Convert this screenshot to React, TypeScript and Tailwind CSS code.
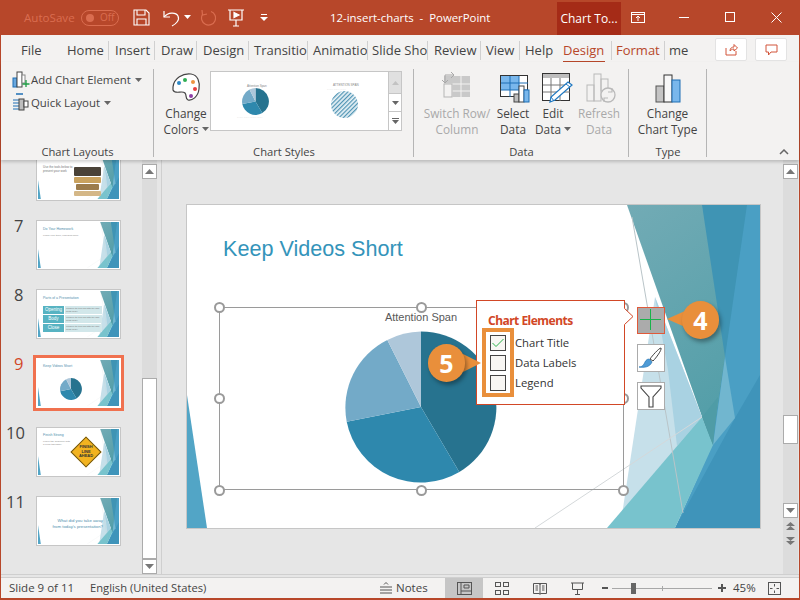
import React from "react";

const UI = "font-['Open_Sans','Noto_Sans',sans-serif]";

function Decor() {
  return (
    <svg viewBox="187 205 573 323" preserveAspectRatio="none" className="absolute inset-0 w-full h-full">
      <defs>
        <linearGradient id="tg" x1="0" y1="0" x2="0.3" y2="1">
          <stop offset="0" stopColor="#72abb5" />
          <stop offset="1" stopColor="#559fa9" />
        </linearGradient>
      </defs>
      <polygon points="187,395 207,528 187,528" fill="#52a5c6" />
      <polygon points="702,205 760,205 760,528 675,528 712,445" fill="#4a9fc4" />
      <polygon points="735,418 760,375 760,528 675,528" fill="#3f94ba" />
      <polygon points="702,205 747,205 725,357 712,445" fill="#3f94b4" />
      <polygon points="627,205 702,205 725,357 712,445" fill="url(#tg)" />
      <polygon points="725,357 735,418 713,445" fill="#71b6cf" />
      <polygon points="655,297 702,417 620,528" fill="#c6e0ea" />
      <polygon points="655,297 702,417 677,446 668,370" fill="#a9d2e2" />
      <polygon points="607,528 702,417 713,445 675,528" fill="#78c3cd" />
      <polygon points="702,417 718,397 713,445" fill="#4f9ca6" />
      <line x1="632" y1="217" x2="683" y2="513" stroke="#b9c4c8" strokeWidth="1" />
      <line x1="702" y1="417" x2="535" y2="528" stroke="#d4d8da" strokeWidth="1" />
    </svg>
  );
}

function Pie({ className }: { className: string }) {
  return (
    <svg viewBox="345 331 152 152" className={className}>
      <path d="M421,407 L421,331.5 A75.5,75.5 0 0 1 459.3,472 Z" fill="#27738f" />
      <path d="M421,407 L459.3,472 A75.5,75.5 0 0 1 346.7,421.7 Z" fill="#2e88ad" />
      <path d="M421,407 L346.7,421.7 A75.5,75.5 0 0 1 387.3,340 Z" fill="#73aac8" />
      <path d="M421,407 L387.3,340 A75.5,75.5 0 0 1 421,331.5 Z" fill="#aec7da" />
    </svg>
  );
}

function Thumb({ n, selected, children }: { n: string; selected?: boolean; children?: React.ReactNode }) {
  return (
    <div className="flex h-[50px] shrink-0">
      <div className={`w-[35px] text-[16.5px] leading-[12px] ${n.length > 1 ? "pl-[5px]" : "pl-[13px]"} ${selected ? "text-[#d24726]" : "text-[#444444]"}`}>
        {n}
      </div>
      <div
        className={`relative w-[85px] h-[50px] bg-white overflow-hidden ${selected ? "border border-white outline-[3px] outline outline-[#f0714f]" : "border border-[#c6c6c6]"}`}
      >
        <div className="absolute inset-[1px]">
          <Decor />
        </div>
        {children}
      </div>
    </div>
  );
}

function Tiny({ className, children }: { className: string; children: React.ReactNode }) {
  return <div className={`absolute font-['Liberation_Sans',sans-serif] whitespace-nowrap ${className}`}>{children}</div>;
}

function Handle({ x, y }: { x: string; y: string }) {
  return <div className={`absolute w-[11px] h-[11px] rounded-full bg-white border-2 border-[#9a9a9a] ${x} ${y}`} />;
}

function Tri({ c = "#666666" }: { c?: string }) {
  return (
    <svg width="7" height="4" viewBox="0 0 7 4" className="inline-block">
      <path d="M0 0H7L3.5 4Z" fill={c} />
    </svg>
  );
}

function BigBtn({ w, dim, l1, l2, caret, icon }: { w: string; dim?: boolean; l1: string; l2: string; caret?: boolean; icon: React.ReactNode }) {
  return (
    <div className={`${w} flex flex-col items-center shrink-0`}>
      <div className="h-[42px] w-full flex items-end justify-center">{icon}</div>
      <div className={`mt-[1px] text-center text-[11.8px] leading-[16px] whitespace-nowrap ${dim ? "text-[#a9a9a9]" : "text-[#444444]"}`}>
        <div>{l1}</div>
        <div>
          {l2}
          {caret && (
            <span className="ml-[3px] relative top-[-2px]">
              <Tri />
            </span>
          )}
        </div>
      </div>
    </div>
  );
}

function Group({ w, label, children }: { w: string; label: string; children: React.ReactNode }) {
  return (
    <div className={`${w} shrink-0 flex flex-col relative h-full`}>
      <div className="flex-1 flex min-h-0">{children}</div>
      <div className="h-[16px] text-center text-[11.2px] leading-[16px] text-[#444444]">{label}</div>
      <div className="absolute right-0 top-[7px] bottom-[3px] w-px bg-[#b5b5b5]" />
    </div>
  );
}

const tabs = [
  { t: "File", c: "w-[56px] pl-[20px]" },
  { t: "Home", c: "w-[52px] pl-[10px] border-r" },
  { t: "Insert", c: "w-[46px] pl-[6px] border-r" },
  { t: "Draw", c: "w-[42px] pl-[6px] border-r" },
  { t: "Design", c: "w-[52px] pl-[6px] border-r" },
  { t: "Transitio", c: "w-[59px] pl-[5px] border-r" },
  { t: "Animatio", c: "w-[60px] pl-[5px] border-r" },
  { t: "Slide Show", c: "w-[60px] pl-[4px] pr-[5px] border-r" },
  { t: "Review", c: "w-[53px] pl-[6px] border-r" },
  { t: "View", c: "w-[39px] pl-[5px] border-r" },
  { t: "Help", c: "w-[39px] pl-[5px]" },
];

function ScrollBtn({ up, className = "" }: { up?: boolean; className?: string }) {
  return (
    <div className={`w-[15px] h-[15px] bg-white border border-[#ababab] flex items-center justify-center shrink-0 ${className}`}>
      <svg width="9" height="5" viewBox="0 0 9 5">
        <path d={up ? "M0 5H9L4.5 0Z" : "M0 0H9L4.5 5Z"} fill="#777777" />
      </svg>
    </div>
  );
}

export default function App() {
  return (
    <div className={`w-[800px] h-[600px] flex flex-col bg-[#b7472a] overflow-hidden ${UI}`}>
      {/* Title bar */}
      <div className="h-[35px] shrink-0 flex items-center text-white text-[12px] relative">
        <span className="ml-[24px] w-[57px] text-[#da6d50] text-[11.6px]">AutoSave</span>
        <div className="w-[38px] h-[16px] rounded-full border border-[#da6d50] flex items-center pl-[4px] text-[#da6d50] text-[10px]">
          <span className="w-[8px] h-[8px] rounded-full bg-[#da6d50] mr-[6px]" />
          Off
        </div>
        <svg width="17" height="17" viewBox="0 0 17 17" className="ml-[14px]" fill="none" stroke="#fff" strokeWidth="1.1">
          <path d="M1 1H13L16 4V16H1Z" />
          <path d="M4 1V6H12V1M4 16V10H13V16" />
        </svg>
        <svg width="18" height="18" viewBox="0 0 18 18" className="ml-[13px]" fill="none" stroke="#fff" strokeWidth="1.2">
          <path d="M1 2V8H7" />
          <path d="M1 8C5 3 13 3 15 7C17 11 13 15 9 17" />
        </svg>
        <span className="ml-[3px] relative top-[-1px] flex">
          <Tri c="#ffffff" />
        </span>
        <svg width="17" height="17" viewBox="0 0 17 17" className="ml-[8px]" fill="none" stroke="#da6d50" strokeWidth="1.2">
          <path d="M3 1L3.5 6L8 5" />
          <path d="M3.5 5.5A7 7 0 1 0 12 2.5" />
        </svg>
        <svg width="17" height="18" viewBox="0 0 17 18" className="ml-[12px]" fill="none" stroke="#fff" strokeWidth="1.2">
          <path d="M0 1H16M2 1V11H14V1M8 11V17M5 17H11" />
          <path d="M6 3.5L11 6L6 8.5Z" fill="#fff" />
        </svg>
        <svg width="8" height="8" viewBox="0 0 8 8" className="ml-[15px]" fill="#fff">
          <rect x="1" y="0" width="6" height="1" />
          <path d="M0 3H8L4 7Z" />
        </svg>
        <span className="ml-[62px] text-[11.4px] whitespace-pre">12-insert-charts  -  PowerPoint</span>
        <div className="absolute left-[557px] top-[2px] w-[64px] h-[33px] bg-[#a52b17] flex items-center justify-center text-[12px]">
          Chart To...
        </div>
        <svg width="14" height="11" viewBox="0 0 14 11" className="absolute left-[631px] top-[12px]" fill="none" stroke="#fff" strokeWidth="1">
          <rect x="0.5" y="0.5" width="13" height="10" />
          <path d="M0.5 2.5H13.5M7 9V4.5M5 6L7 4L9 6" />
        </svg>
        <div className="absolute left-[679px] top-[17px] w-[10px] h-px bg-white" />
        <div className="absolute left-[725px] top-[12px] w-[10px] h-[10px] border border-white" />
        <svg width="11" height="11" viewBox="0 0 11 11" className="absolute left-[771px] top-[12px]" stroke="#fff" strokeWidth="1">
          <path d="M0.5 0.5L10.5 10.5M10.5 0.5L0.5 10.5" />
        </svg>
      </div>

      {/* Ribbon + body wrapper */}
      <div className="flex-1 min-h-0 flex flex-col mx-px bg-[#f3f2f1]">
        {/* Tabs */}
        <div className="h-[27px] shrink-0 flex items-center pt-[3px] text-[13px] text-[#444444] relative">
          {tabs.map((t) => (
            <div key={t.t} className={`${t.c} h-[19px] leading-[18px] overflow-hidden whitespace-nowrap border-[#d0d0d0] shrink-0`}>
              {t.t}
            </div>
          ))}
          <div className="w-[52px] h-[19px] leading-[18px] shrink-0 pl-[4px] text-[#b7472a] relative">
            Design
            <div className="absolute left-[4px] top-[20px] w-[42px] h-[3px] bg-[#b7472a]" />
          </div>
          <div className="w-[53px] h-[19px] leading-[18px] shrink-0 pl-[4px] text-[#b7472a] border-l border-[#d0d0d0]">Format</div>
          <div className="h-[19px] leading-[18px] pl-[4px] border-l border-[#d0d0d0]">me</div>
          <div className="absolute left-[714px] top-[3px] w-[32px] h-[23px] bg-white border border-[#e3e3e3] rounded-[2px] flex items-center justify-center">
            <svg width="13" height="13" viewBox="0 0 13 13" fill="none" stroke="#d2553a" strokeWidth="1">
              <path d="M1 5V12H11V8M5 8C5 5 7 4 9 4V1.5L12.5 5L9 8V6C7 6 6 7 5 8Z" />
            </svg>
          </div>
          <div className="absolute left-[754px] top-[3px] w-[32px] h-[23px] bg-white border border-[#e3e3e3] rounded-[2px] flex items-center justify-center">
            <svg width="13" height="12" viewBox="0 0 13 12" fill="none" stroke="#d2553a" strokeWidth="1">
              <path d="M1 1H12V8H6L3.5 11V8H1Z" />
            </svg>
          </div>
        </div>

        {/* Ribbon */}
        <div className="h-[98px] shrink-0 flex relative z-10 bg-[#f3f2f1] shadow-[0_2px_3px_rgba(0,0,0,0.18)] text-[#444444]">
          <Group w="w-[153px]" label="Chart Layouts">
            <div className="flex flex-col pl-[11px] pt-[9px] gap-[5px] text-[11.4px] leading-[18px]">
              <div className="flex items-center h-[18px]">
                <svg width="18" height="18" viewBox="0 0 18 18" fill="none" className="relative top-[-1px]">
                  <rect x="1" y="8" width="4" height="9" fill="#69a8df" stroke="#1f6fb5" />
                  <rect x="5" y="2" width="5" height="15" fill="#fff" stroke="#444" />
                  <rect x="10" y="5" width="3" height="8" fill="#fff" stroke="#888" />
                  <path d="M14 10V17M10.5 14H17.5" stroke="#1f9d45" strokeWidth="1.3" />
                </svg>
                <span className="ml-[1px] whitespace-nowrap">Add Chart Element</span>
                <span className="ml-[4px] flex"><Tri /></span>
              </div>
              <div className="flex items-center h-[18px]">
                <svg width="18" height="18" viewBox="0 0 18 18" fill="none" className="relative top-[-1px]">
                  <path d="M4 1H11" stroke="#1f6fb5" strokeWidth="1.5" />
                  <path d="M1 7H7M1 10H7M1 13H7M1 16H7" stroke="#1f6fb5" />
                  <rect x="7" y="6" width="5" height="11" fill="#bdbdbd" stroke="#444" />
                  <rect x="12" y="8" width="4" height="6" fill="#fff" stroke="#444" />
                </svg>
                <span className="ml-[1px] whitespace-nowrap">Quick Layout</span>
                <span className="ml-[4px] flex"><Tri /></span>
              </div>
            </div>
          </Group>
          <Group w="w-[260px]" label="Chart Styles">
            <BigBtn
              w="w-[64px]"
              l1="Change"
              l2="Colors"
              caret
              icon={
                <svg width="30" height="30" viewBox="0 0 30 30" fill="none" className="mb-[2px]">
                  <path d="M2 15C3 6 12 1 20 2C27 3 29 10 28 17C27 25 21 29 17 28C14 27 16 23 14 21C11 18 4 23 2 18Z" fill="#fff" stroke="#444" strokeWidth="1.2" />
                  <circle cx="8" cy="11" r="2" fill="#2e88c5" />
                  <circle cx="14" cy="8" r="2" fill="#2fae55" />
                  <circle cx="22" cy="10" r="2" fill="#ee9340" />
                  <circle cx="24" cy="17" r="2" fill="#e8403f" />
                  <circle cx="20" cy="24" r="2" fill="#8e3fa6" />
                </svg>
              }
            />
            <div className="ml-[-8px] mt-[9px] w-[192px] h-[60px] bg-white border border-[#c6c6c6] flex relative">
              <div className="w-[88px] relative shrink-0">
                <Tiny className="left-[36px] top-[12px] text-[3px] text-[#888]">Attention Span</Tiny>
                <Pie className="absolute left-[31px] top-[16px] w-[27px] h-[27px]" />
                <Tiny className="left-[26px] top-[44px] text-[2.5px] text-[#888]">------- ------- ------- -------</Tiny>
              </div>
              <div className="flex-1 relative">
                <Tiny className="left-[34px] top-[11px] text-[3px] text-[#888]">ATTENTION SPAN</Tiny>
                <Tiny className="left-[28px] top-[16px] text-[2.5px] text-[#888]">------- ------- -------</Tiny>
                <svg width="27" height="27" viewBox="0 0 27 27" className="absolute left-[32px] top-[19px]">
                  <defs>
                    <pattern id="hatch" width="3" height="3" patternUnits="userSpaceOnUse" patternTransform="rotate(-45)">
                      <rect width="3" height="3" fill="#e6f1f6" />
                      <rect width="3" height="1.2" fill="#4e93b3" />
                    </pattern>
                  </defs>
                  <circle cx="13.5" cy="13.5" r="13.5" fill="url(#hatch)" />
                </svg>
              </div>
              <div className="w-[13px] shrink-0 ml-auto border-l border-[#c6c6c6] flex flex-col">
                <div className="h-[21px] bg-[#e0e0e0] flex items-center justify-center">
                  <svg width="7" height="4" viewBox="0 0 7 4"><path d="M0 4H7L3.5 0Z" fill="#c2c2c2" /></svg>
                </div>
                <div className="h-[19px] border-y border-[#c6c6c6] flex items-center justify-center">
                  <Tri />
                </div>
                <div className="flex-1 flex flex-col items-center justify-center">
                  <div className="w-[7px] h-px bg-[#666] mb-px" />
                  <Tri />
                </div>
              </div>
            </div>
          </Group>
          <Group w="w-[215px]" label="Data">
            <div className="w-[7px] shrink-0" />
            <BigBtn
              w="w-[72px]"
              dim
              l1="Switch Row/"
              l2="Column"
              icon={
                <svg width="30" height="27" viewBox="0 0 30 27" fill="none" className="mb-[6px] mr-[2px]">
                  <rect x="3" y="5" width="26" height="21" fill="#c9c9c9" />
                  <path d="M11 13V26M20 5V26M3 13H29M3 20H29" stroke="#f3f2f1" />
                  <rect x="3" y="13" width="8" height="13" fill="#f3f2f1" stroke="#b5b5b5" />
                  <path d="M4 11V4H12M10 1L13 4L10 7M1 9L4 12L7 9" stroke="#a8a8a8" />
                </svg>
              }
            />
            <BigBtn
              w="w-[40px]"
              l1="Select"
              l2="Data"
              icon={
                <svg width="30" height="28" viewBox="0 0 30 28" fill="none" className="mb-[1px] ml-[4px]">
                  <rect x="0.5" y="0.5" width="27" height="21" fill="#fff" stroke="#333" />
                  <rect x="1" y="1" width="18" height="14" fill="#79b7ec" />
                  <path d="M10 1V22M19 1V22M1 8H28M1 15H28" stroke="#1f6fb5" />
                  <rect x="14" y="19" width="5" height="8" fill="#bdbdbd" stroke="#444" />
                  <rect x="19" y="11" width="5" height="16" fill="#fff" stroke="#444" />
                  <rect x="24" y="15" width="5" height="12" fill="#79b7ec" stroke="#1f6fb5" />
                </svg>
              }
            />
            <BigBtn
              w="w-[40px]"
              l1="Edit"
              l2="Data"
              caret
              icon={
                <svg width="31" height="30" viewBox="0 0 31 30" fill="none" className="mb-[1px] ml-[8px]">
                  <rect x="0.5" y="0.5" width="27" height="27" fill="#fff" stroke="#333" />
                  <rect x="1" y="1" width="26" height="4" fill="#bdbdbd" />
                  <path d="M9 5V28M18 5V28M1 12H28M1 19H28" stroke="#777" />
                  <path d="M26 9L30 12L13 27L8 29L9 24Z" fill="#fff" stroke="#1f78c1" strokeWidth="1.2" />
                  <path d="M24 11L28 14M9 24L12 28" stroke="#1f78c1" />
                </svg>
              }
            />
            <BigBtn
              w="w-[52px]"
              dim
              l1="Refresh"
              l2="Data"
              icon={
                <svg width="30" height="30" viewBox="0 0 30 30" fill="none" stroke="#b9b9b9" className="mb-[1px] ml-[4px]">
                  <rect x="1" y="12" width="7" height="16" />
                  <rect x="8" y="1" width="7" height="27" />
                  <rect x="15" y="6" width="7" height="12" />
                  <circle cx="22" cy="22" r="7" fill="#f3f2f1" strokeWidth="1.3" />
                  <path d="M26 15V19H22M18 29V25H22" strokeWidth="1.1" />
                </svg>
              }
            />
          </Group>
          <Group w="w-[78px]" label="Type">
            <BigBtn
              w="w-[77px]"
              l1="Change"
              l2="Chart Type"
              icon={
                <svg width="26" height="29" viewBox="0 0 26 29" fill="none" className="mb-[1px]">
                  <rect x="1" y="12" width="8" height="16" fill="#c4c4c4" stroke="#555" />
                  <rect x="9" y="1" width="8" height="27" fill="#f8f8f8" stroke="#333" />
                  <rect x="17" y="6" width="8" height="22" fill="#79b7ec" stroke="#1f6fb5" />
                </svg>
              }
            />
          </Group>
          <div className="flex-1 relative">
            <svg width="10" height="6" viewBox="0 0 10 6" className="absolute right-[10px] bottom-[5px]" fill="none" stroke="#666" strokeWidth="1.5">
              <path d="M1 5L5 1L9 5" />
            </svg>
          </div>
        </div>

        {/* Main */}
        <div className="flex-1 min-h-0 flex bg-[#e6e6e6]">
          {/* Thumbnails */}
          <div className="w-[141px] shrink-0 overflow-hidden">
            <div className="flex flex-col gap-[19px] -mt-[9px]">
              <Thumb n="">
                <Tiny className="left-[6px] top-[13px] text-[3px] text-[#777] leading-[4px]">Use the tools below to<br />present your work</Tiny>
                <div className="absolute left-[37px] top-[15px] w-[27px] h-[31px] flex flex-col gap-px">
                  <div className="h-[9px] bg-[#4a4238] rounded-[1px]" />
                  <div className="h-[6px] bg-[#c9a25f] rounded-[1px]" />
                  <div className="h-[6px] bg-[#9c7c4c] rounded-[1px] mx-[2px]" />
                  <div className="h-[5px] bg-[#d4b787] rounded-[1px]" />
                </div>
              </Thumb>
              <Thumb n="7">
                <Tiny className="left-[6px] top-[6px] text-[3.5px] text-[#4f90ad]">Do Your Homework</Tiny>
                <Tiny className="left-[6px] top-[13px] text-[2.5px] text-[#888]">Learn your topic, research more</Tiny>
              </Thumb>
              <Thumb n="8">
                <Tiny className="left-[6px] top-[6px] text-[3.5px] text-[#4f90ad]">Parts of a Presentation</Tiny>
                <div className="absolute left-[6px] top-[16px] flex flex-col gap-px">
                  {["Opening", "Body", "Close"].map((s) => (
                    <div key={s} className="flex gap-px">
                      <div className="w-[21px] h-[8px] bg-[#57b3c2] text-white text-[4.5px] leading-[8px] text-center font-['Liberation_Sans',sans-serif]">{s}</div>
                      <div className="w-[37px] h-[8px] bg-[#d2e7ea] text-[#777] text-[2px] leading-[3px] font-['Liberation_Sans',sans-serif] px-px pt-px overflow-hidden">Introduce the topic and state the main points clearly</div>
                    </div>
                  ))}
                </div>
              </Thumb>
              <Thumb n="9" selected>
                <Tiny className="left-[6px] top-[5px] text-[3.5px] text-[#4f90ad]">Keep Videos Short</Tiny>
                <Pie className="absolute left-[23px] top-[19px] w-[22px] h-[22px]" />
              </Thumb>
              <Thumb n="10">
                <Tiny className="left-[6px] top-[5px] text-[3.5px] text-[#4f90ad]">Finish Strong</Tiny>
                <Tiny className="left-[6px] top-[12px] text-[2.5px] leading-[3px] text-[#888]">Leave the audience with<br />a clear takeaway</Tiny>
                <div className="absolute left-[38px] top-[13px] w-[22px] h-[22px] rotate-45 bg-[#f2b320] border border-[#6b5310]" />
                <Tiny className="left-[39px] top-[17px] w-[20px] text-center text-[4px] leading-[4.5px] font-bold text-[#333]">FINISH<br />LINE<br />AHEAD</Tiny>
              </Thumb>
              <Thumb n="11">
                <Tiny className="left-[9px] top-[21px] w-[57px] text-right text-[4.3px] leading-[6px] text-[#4f90ad]">What did you take away<br />from today's presentation?</Tiny>
              </Thumb>
            </div>
          </div>

          {/* Thumb scrollbar */}
          <div className="w-[15px] shrink-0 bg-[#dcdcdc] flex flex-col pt-[4px]">
            <ScrollBtn up />
            <div className="flex-1 relative">
              <div className="absolute left-0 right-0 bottom-0 top-[199px] bg-white border border-[#ababab]" />
            </div>
            <ScrollBtn />
          </div>
          <div className="w-[4px] shrink-0" />
          <div className="w-px shrink-0 bg-[#cfcfcf]" />

          {/* Editor */}
          <div className="flex-1 min-w-0 pl-[25px] pt-[45px] relative overflow-hidden">
            <div className="relative w-[573px] h-[323px] bg-white ring-1 ring-[#c6c6c6]">
              <Decor />
              <div className="absolute left-[36px] top-[29px] text-[21.6px] leading-[30px] text-[#3494ba] font-['Liberation_Sans',sans-serif]">
                Keep Videos Short
              </div>

              {/* Chart frame */}
              <div className="absolute left-[32px] top-[102px] w-[405px] h-[183px] border border-[#9a9a9a]" />
              <div className="absolute left-[134px] top-[105px] w-[200px] text-center text-[11px] leading-[14px] text-[#595959] font-['Liberation_Sans',sans-serif]">
                Attention Span
              </div>
              <Pie className="absolute left-[158px] top-[126px] w-[152px] h-[152px]" />
              <Handle x="left-[27px]" y="top-[97px]" />
              <Handle x="left-[229px]" y="top-[97px]" />
              <Handle x="left-[431px]" y="top-[97px]" />
              <Handle x="left-[27px]" y="top-[188px]" />
              <Handle x="left-[431px]" y="top-[188px]" />
              <Handle x="left-[27px]" y="top-[280px]" />
              <Handle x="left-[229px]" y="top-[280px]" />
              <Handle x="left-[431px]" y="top-[280px]" />

              {/* Chart elements popup */}
              <div className="absolute left-[289px] top-[95px] w-[149px] h-[105px] bg-white border border-[#d24726] text-[11.3px] text-[#333333]">
                <div className="absolute left-[11px] top-[12px] text-[12px] leading-[16px] font-bold text-[#d24726] whitespace-nowrap font-['Noto_Sans',sans-serif] tracking-[-0.5px]">
                  Chart Elements
                </div>
                <div className="absolute left-[13px] top-[34px] flex flex-col gap-[4px]">
                  {["Chart Title", "Data Labels", "Legend"].map((s, i) => (
                    <div key={s} className="flex items-center h-[16px]">
                      <div className="w-[16px] h-[16px] bg-[#f8f6f3] border border-[#444444] flex items-center justify-center shrink-0">
                        {i === 0 && (
                          <svg width="12" height="10" viewBox="0 0 12 10" fill="none" stroke="#2bb34a" strokeWidth="1">
                            <path d="M0.5 5L4 8.5L11.5 1" />
                          </svg>
                        )}
                      </div>
                      <span className="ml-[9px] whitespace-nowrap leading-[16px]">{s}</span>
                    </div>
                  ))}
                </div>
                <div className="absolute left-[5px] top-[27px] w-[32px] h-[69px] border-[4px] border-[#e98f3b]" />
              </div>
              <svg width="12" height="20" viewBox="0 0 12 20" className="absolute left-[436px] top-[102px]">
                <path d="M1 1L10 9.5L1 18" fill="#fff" stroke="#d24726" />
                <rect x="0" y="1.5" width="1.5" height="16" fill="#fff" />
              </svg>

              {/* Chart buttons */}
              <div className="absolute left-[450px] top-[102px] flex flex-col gap-[10px]">
                <div className="w-[28px] h-[27px] bg-[#ababab] border border-[#e0593a] relative">
                  <div className="absolute left-[12px] top-[1px] w-px h-[21px] bg-[#19b34a]" />
                  <div className="absolute left-[2px] top-[11px] w-[21px] h-px bg-[#19b34a]" />
                </div>
                <div className="w-[28px] h-[28px] bg-white border border-[#ababab] flex items-center justify-center">
                  <svg width="24" height="22" viewBox="0 0 24 22" fill="none">
                    <path d="M22 1C20 1 13 9 11 12L14 14C17 11 23 3 22 1Z" fill="#fff" stroke="#444" />
                    <path d="M10 12C7 12 6 15 5 17C4 19 2 20 0 20C5 21 11 20 13 15Z" fill="#4e9bd6" stroke="#2a78b8" strokeWidth="0.7" />
                  </svg>
                </div>
                <div className="w-[28px] h-[28px] bg-white border border-[#ababab] flex items-center justify-center">
                  <svg width="22" height="23" viewBox="0 0 22 23" fill="none" stroke="#444" strokeWidth="1.1">
                    <path d="M1 1H21V3L13 12V22H9V12L1 3Z" />
                  </svg>
                </div>
              </div>

              {/* Callout 4 */}
              <svg width="20" height="20" viewBox="0 0 20 20" className="absolute left-[480px] top-[105px]">
                <path d="M0 9L18 1V17Z" fill="#e98f3b" />
              </svg>
              <div className="absolute left-[495px] top-[96px] w-[37px] h-[38px] rounded-full bg-[#e98f3b] shadow-[2px_3px_4px_rgba(0,0,0,0.35)] flex items-center justify-center text-white text-[25px] font-bold font-['Open_Sans',sans-serif] leading-none">
                4
              </div>

              {/* Callout 5 */}
              <svg width="20" height="20" viewBox="0 0 20 20" className="absolute left-[274px] top-[148px]">
                <path d="M20 10L2 1V19Z" fill="#e98f3b" />
              </svg>
              <div className="absolute left-[241px] top-[139px] w-[37px] h-[38px] rounded-full bg-[#e98f3b] shadow-[2px_3px_4px_rgba(0,0,0,0.35)] flex items-center justify-center text-white text-[25px] font-bold font-['Open_Sans',sans-serif] leading-none">
                5
              </div>
            </div>
          </div>

          {/* Right scrollbar */}
          <div className="w-[15px] shrink-0 bg-[#dcdcdc] flex flex-col pt-[4px] relative">
            <ScrollBtn up />
            <div className="h-[236px] relative shrink-0">
              <div className="absolute left-0 top-[236px] w-[15px] h-[29px] bg-white border border-[#ababab]" />
            </div>
            <div className="h-[88px] shrink-0" />
            <ScrollBtn />
            <div className="flex flex-col items-center mt-[4px] gap-[5px]">
              <svg width="9" height="9" viewBox="0 0 9 9" fill="#777">
                <path d="M4.5 0L9 4H0ZM4.5 4L9 8H0Z" />
              </svg>
              <svg width="9" height="9" viewBox="0 0 9 9" fill="#777">
                <path d="M4.5 9L9 5H0ZM4.5 5L9 1H0Z" />
              </svg>
            </div>
          </div>
          <div className="w-[1px] shrink-0" />
        </div>

        <div className="h-[3px] shrink-0 bg-[#e6e6e6] border-t border-[#cfcfcf]" />

        {/* Status bar */}
        <div className="h-[21px] shrink-0 bg-[#f3f2f1] border-t border-[#cfcfcf] flex items-center text-[11.5px] text-[#444444] relative z-10">
          <span className="ml-[8px] w-[81px] whitespace-nowrap">Slide 9 of 11</span>
          <span className="w-[290px] whitespace-nowrap text-[11.2px]">English (United States)</span>
          <svg width="12" height="12" viewBox="0 0 12 12" stroke="#555" fill="none">
            <path d="M4 2.5L6 .5L8 2.5M0 5H12M0 8H12M0 11H12" />
          </svg>
          <span className="ml-[4px] w-[49px]">Notes</span>
          <div className="w-[38px] h-full bg-[#c6c6c6] flex items-center justify-center">
            <svg width="15" height="13" viewBox="0 0 15 13" fill="none" stroke="#555">
              <rect x=".5" y=".5" width="14" height="12" />
              <path d="M4 .5V12.5M4 9H14.5M7 3H12V6H7Z" />
            </svg>
          </div>
          <svg width="14" height="13" viewBox="0 0 14 13" fill="none" stroke="#555" className="ml-[12px]">
            <rect x=".5" y=".5" width="5" height="4" />
            <rect x="8.5" y=".5" width="5" height="4" />
            <rect x=".5" y="8.5" width="5" height="4" />
            <rect x="8.5" y="8.5" width="5" height="4" />
          </svg>
          <svg width="14" height="13" viewBox="0 0 14 13" fill="none" stroke="#555" className="ml-[24px]">
            <path d="M7 2V12M.5 1.5H7L7 2.5L7 1.5H13.5V11.5H7.5L7 12.5L6.5 11.5H.5ZM2.5 4H5M2.5 6H5M2.5 8H5M9 4H11.5M9 6H11.5M9 8H11.5" />
          </svg>
          <svg width="13" height="13" viewBox="0 0 13 13" fill="none" stroke="#555" className="ml-[24px]">
            <path d="M0 1H13M1.5 1V7.5H11.5V1M6.5 7.5V12M4 12.5H9" />
          </svg>
          <div className="ml-[18px] w-[6px] h-[2px] bg-[#555]" />
          <div className="ml-[4px] w-[100px] h-px bg-[#a8a8a8] relative">
            <div className="absolute left-[19px] top-[-5px] w-[5px] h-[11px] bg-[#666]" />
            <div className="absolute left-[50px] top-[-2px] w-px h-[5px] bg-[#a8a8a8]" />
          </div>
          <svg width="8" height="8" viewBox="0 0 8 8" stroke="#555" strokeWidth="2" className="ml-[6px]">
            <path d="M0 4H8M4 0V8" />
          </svg>
          <span className="ml-[7px] w-[35px]">45%</span>
          <svg width="13" height="13" viewBox="0 0 13 13" fill="none" stroke="#555">
            <rect x=".5" y=".5" width="12" height="12" />
            <path d="M6.5 2V4.5M6.5 8.5V11M2 6.5H4.5M8.5 6.5H11" />
          </svg>
        </div>
      </div>
      <div className="h-[2px] shrink-0" />
    </div>
  );
}
